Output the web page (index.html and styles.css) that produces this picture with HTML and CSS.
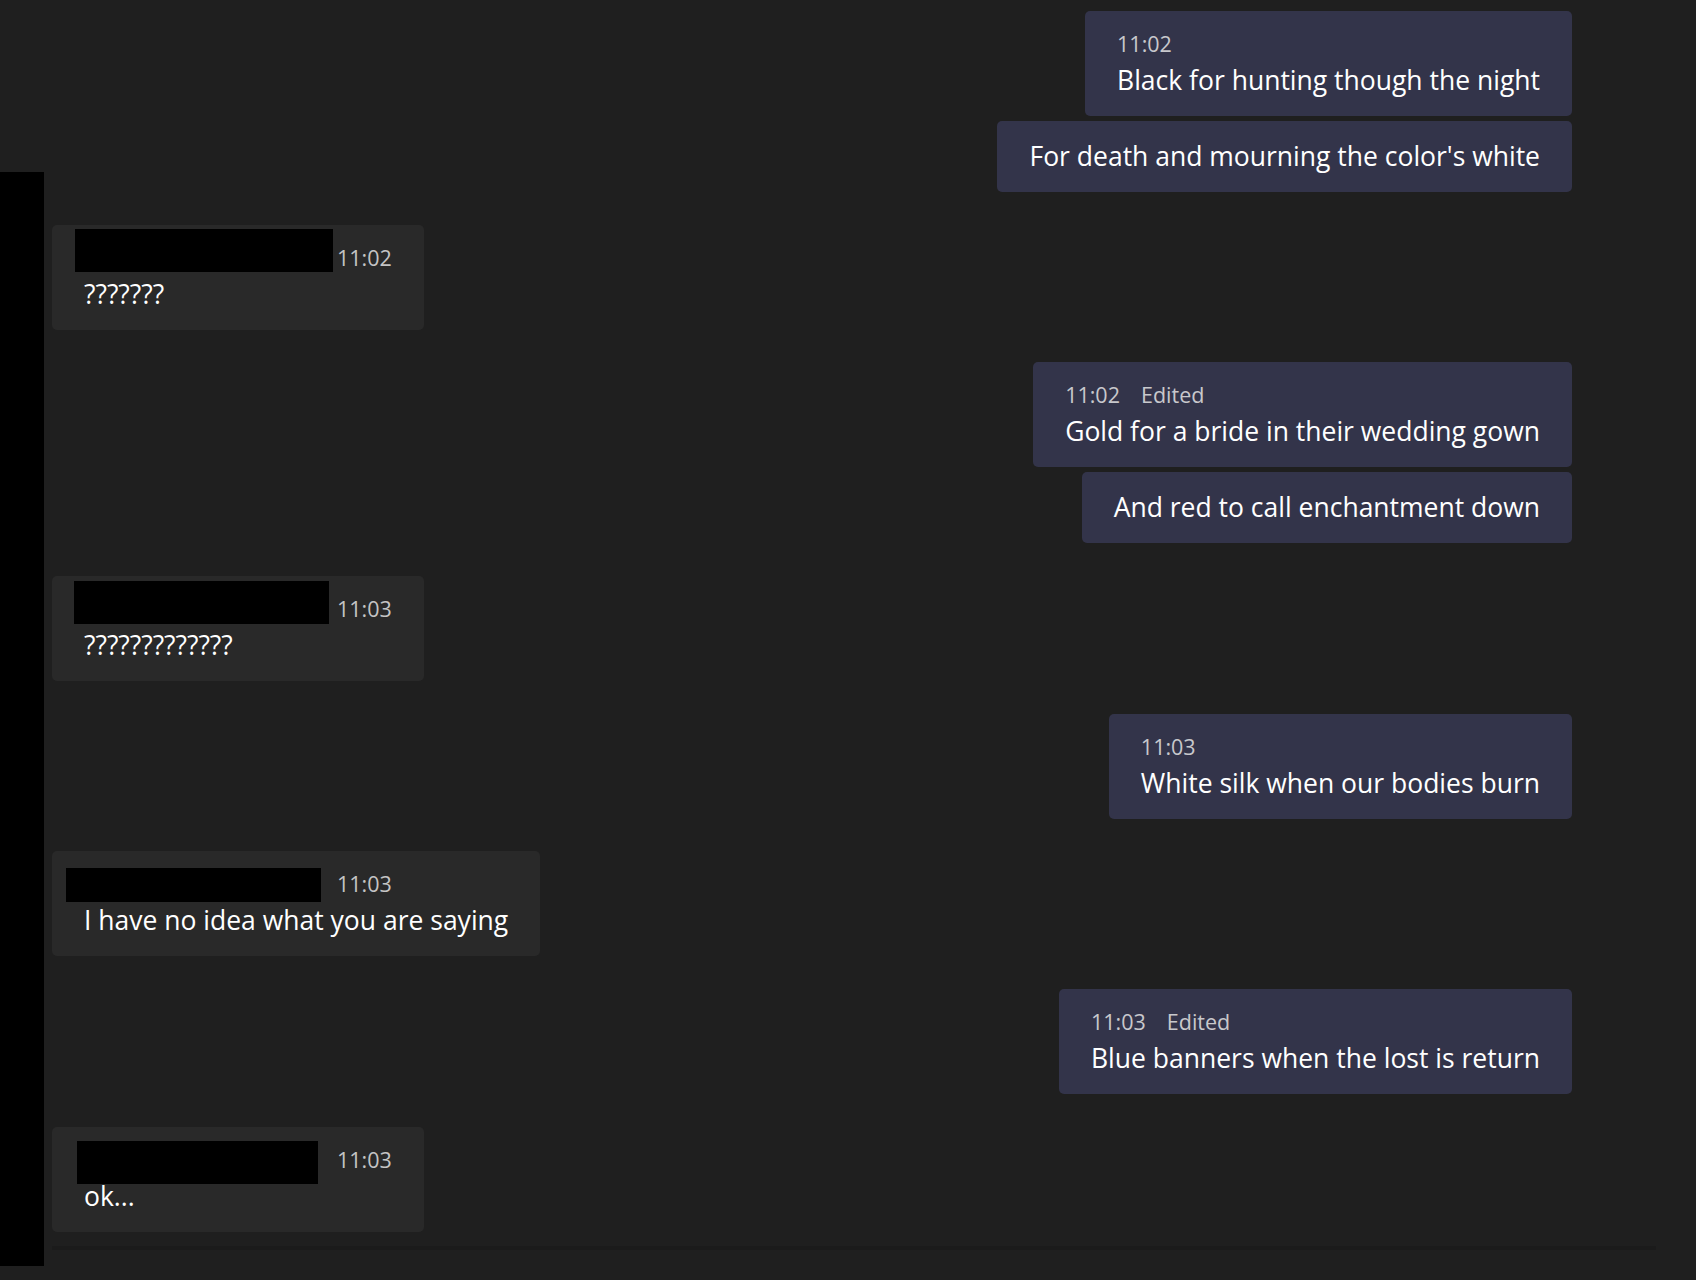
FILE: index.html
```html
<!DOCTYPE html>
<html lang="en">
<head>
<meta charset="utf-8">
<title>Chat</title>
<link rel="stylesheet" href="styles.css">
</head>
<body>
<div class="app">
  <div class="rail"></div>
  <main class="chat">
    <div class="messages">
      <div class="group mine">
        <div class="bubble">
          <div class="meta"><span class="time">11:02</span></div>
          <div class="body">Black for hunting though the night</div>
        </div>
        <div class="bubble">
          <div class="body">For death and mourning the color's white</div>
        </div>
      </div>

      <div class="group theirs">
        <div class="bubble">
          <div class="meta"><span class="sender"></span><span class="time">11:02</span></div>
          <div class="body">???????</div>
          <span class="redact redact-a"></span>
        </div>
      </div>

      <div class="group mine">
        <div class="bubble">
          <div class="meta"><span class="time">11:02</span><span class="edited">Edited</span></div>
          <div class="body">Gold for a bride in their wedding gown</div>
        </div>
        <div class="bubble">
          <div class="body">And red to call enchantment down</div>
        </div>
      </div>

      <div class="group theirs">
        <div class="bubble">
          <div class="meta"><span class="sender"></span><span class="time">11:03</span></div>
          <div class="body">?????????????</div>
          <span class="redact redact-b"></span>
        </div>
      </div>

      <div class="group mine">
        <div class="bubble">
          <div class="meta"><span class="time">11:03</span></div>
          <div class="body">White silk when our bodies burn</div>
        </div>
      </div>

      <div class="group theirs">
        <div class="bubble">
          <div class="meta"><span class="sender"></span><span class="time">11:03</span></div>
          <div class="body">I have no idea what you are saying</div>
          <span class="redact redact-c"></span>
        </div>
      </div>

      <div class="group mine">
        <div class="bubble">
          <div class="meta"><span class="time">11:03</span><span class="edited">Edited</span></div>
          <div class="body">Blue banners when the lost is return</div>
        </div>
      </div>

      <div class="group theirs">
        <div class="bubble">
          <div class="meta"><span class="sender"></span><span class="time">11:03</span></div>
          <div class="body">ok...</div>
          <span class="redact redact-d"></span>
        </div>
      </div>
    </div>
    <div class="divider"></div>
  </main>
</div>
</body>
</html>
```

FILE: styles.css
```css
html, body {
  margin: 0;
  padding: 0;
}

body {
  background: #1f1f1f;
  width: 1696px;
  height: 1280px;
  overflow: hidden;
  font-family: "Open Sans", "Noto Sans", sans-serif;
  color: #ffffff;
}

.app {
  display: flex;
  height: 100%;
}

.rail {
  flex: none;
  width: 44px;
  height: 1094px;
  margin-top: 172px;
  background: #000000;
}

.chat {
  flex: 1;
  display: flex;
  flex-direction: column;
  padding: 11px 40px 0 8px;
}

.messages {
  display: flex;
  flex-direction: column;
  gap: 32.7px;
  padding-right: 84px;
}

.group {
  display: flex;
  flex-direction: column;
  gap: 5px;
}

.group.mine {
  align-items: flex-end;
}

.group.theirs {
  align-items: flex-start;
}

.bubble {
  position: relative;
  padding: 16px 32px 17px 32px;
  border-radius: 5px;
}

.mine .bubble {
  background: #33344a;
}

.theirs .bubble {
  background: #292929;
}

.meta {
  display: flex;
  align-items: center;
  height: 34px;
  font-size: 21.5px;
  line-height: 34px;
  color: #c8c8cc;
  white-space: nowrap;
}

.theirs .meta {
  color: #c4c4c4;
}

.edited {
  margin-left: 21px;
}

.sender {
  display: inline-block;
  width: 241px;
  margin-right: 12px;
}

.body {
  font-size: 26.5px;
  line-height: 38px;
  white-space: nowrap;
  color: #ffffff;
}

.redact {
  position: absolute;
  background: #000000;
}

.redact-a { left: 23px; top: 4px; width: 258px; height: 43px; }
.redact-b { left: 22px; top: 4.5px; width: 255px; height: 43px; }
.redact-c { left: 14px; top: 17px; width: 255px; height: 34px; }
.redact-d { left: 25px; top: 14px; width: 241px; height: 43px; }

.divider {
  margin-top: 14px;
  height: 4px;
  background: #1b1b1b;
}
```
